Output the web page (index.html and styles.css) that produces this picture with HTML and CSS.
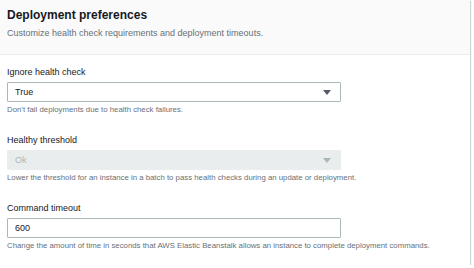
FILE: index.html
```html
<!DOCTYPE html>
<html>
<head>
<meta charset="utf-8">
<link rel="stylesheet" href="styles.css">
</head>
<body>
<div class="card">
  <div class="card-header">
    <h2 class="title">Deployment preferences</h2>
    <p class="subtitle">Customize health check requirements and deployment timeouts.</p>
  </div>
  <div class="card-body">
    <div class="field">
      <div class="label">Ignore health check</div>
      <div class="control select">
        <span class="value">True</span>
        <svg class="caret" width="8" height="5" viewBox="0 0 8 5"><path d="M0 0H8L4 5Z" fill="#545b64"/></svg>
      </div>
      <div class="desc">Don’t fail deployments due to health check failures.</div>
    </div>
    <div class="field">
      <div class="label">Healthy threshold</div>
      <div class="control select disabled">
        <span class="value">Ok</span>
        <svg class="caret" width="8" height="5" viewBox="0 0 8 5"><path d="M0 0H8L4 5Z" fill="#aab7b8"/></svg>
      </div>
      <div class="desc">Lower the threshold for an instance in a batch to pass health checks during an update or deployment.</div>
    </div>
    <div class="field">
      <div class="label">Command timeout</div>
      <div class="control input">
        <span class="value">600</span>
      </div>
      <div class="desc">Change the amount of time in seconds that AWS Elastic Beanstalk allows an instance to complete deployment commands.</div>
    </div>
  </div>
</div>
</body>
</html>
```
FILE: styles.css
```css
html, body {
  margin: 0;
  padding: 0;
  background: #ffffff;
}
body {
  font-family: "Liberation Sans", Arial, sans-serif;
  color: #16191f;
}
.card {
  width: 472px;
  margin-left: -2px;
  background: #ffffff;
  box-shadow: 0 1px 1px 0 rgba(0, 28, 36, 0.3), 1px 1px 1px 0 rgba(0, 28, 36, 0.15), -1px 1px 1px 0 rgba(0, 28, 36, 0.15);
}
.card-header {
  background: #fafafa;
  border-bottom: 1px solid #eaeded;
  padding: 6px 9px 15px 9px;
  height: 33px;
}
.title {
  margin: 0;
  font-size: 12px;
  line-height: 18px;
  font-weight: bold;
  color: #16191f;
}
.subtitle {
  margin: 3px 0 0 0;
  font-size: 9px;
  line-height: 12px;
  color: #687078;
}
.card-body {
  padding: 11px 9px 14px 9px;
  display: flex;
  flex-direction: column;
  gap: 19px;
}
.field {
  display: flex;
  flex-direction: column;
}
.label {
  font-size: 9px;
  line-height: 12px;
  color: #16191f;
}
.control {
  margin-top: 4px;
  width: 334px;
  height: 20px;
  box-sizing: border-box;
  border: 1px solid #aab7b8;
  border-radius: 1px;
  display: flex;
  align-items: center;
  justify-content: space-between;
  padding: 0 9px 0 7px;
  font-size: 9px;
  color: #16191f;
  background: #ffffff;
}
.control.disabled {
  background: #eaeded;
  border-color: #eaeded;
  color: #aab7b8;
}
.caret {
  display: block;
}
.desc {
  margin-top: 3px;
  font-size: 7.8px;
  line-height: 10px;
  color: #687078;
}
```
